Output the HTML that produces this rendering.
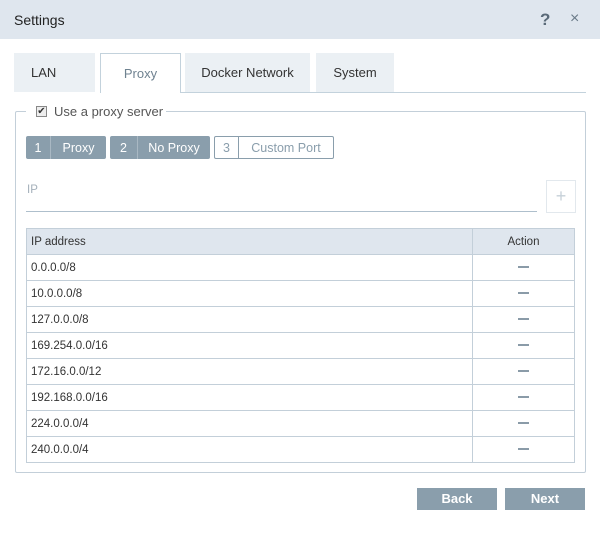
<!DOCTYPE html><html><head><style>
*{box-sizing:border-box;margin:0;padding:0}
body{width:600px;height:538px;background:#fff;font-family:"Liberation Sans",sans-serif;position:relative;overflow:hidden;color:#333}
.a{position:absolute}
.hdr{left:0;top:0;width:600px;height:39px;background:#dfe6ee}
.tab{top:53px;height:39px;background:#ebf0f4;font-size:13px;color:#333;line-height:39px;text-align:center}
.step{top:136px;height:23px;font-size:12.5px;line-height:24px;display:flex;border-radius:2px}
.step span{display:block;text-align:center}
td,th{border:1px solid #c3cfd9;font-size:11.5px;height:26px;padding:0 4px;font-weight:normal;text-align:left}
th{background:#dfe6ee}
.btn{top:488px;width:80px;height:22px;background:#8a9eac;color:#fff;font-weight:bold;font-size:13px;text-align:center;line-height:22px}
.dash{display:inline-block;width:11px;height:2px;background:#8a9ba8;vertical-align:middle}
</style></head><body>
<div class="a hdr"></div>
<div class="a" style="left:14px;top:12px;font-size:14px;color:#222">Settings</div>
<div class="a" style="left:540px;top:10px;font-size:17px;font-weight:bold;color:#5a6a78">?</div>
<div class="a" style="left:570px;top:10px;font-size:16px;color:#6a7a88">×</div>
<div class="a" style="left:180px;top:92px;width:406px;height:1px;background:#c3d2dc"></div>
<div class="a tab" style="left:14px;width:81px;text-align:left;padding-left:17px">LAN</div>
<div class="a tab" style="left:100px;width:81px;height:40px;background:#fff;border:1px solid #c3d2dc;border-bottom:none;color:#6f8290">Proxy</div>
<div class="a tab" style="left:185px;width:125px">Docker Network</div>
<div class="a tab" style="left:316px;width:78px">System</div>
<div class="a" style="left:15px;top:111px;width:571px;height:362px;border:1px solid #c3cfd9;border-radius:2px"></div>
<div class="a" style="left:26px;top:103px;width:140px;height:16px;background:#fff"></div>
<div class="a" style="left:36px;top:106px;width:11px;height:11px;border:1px solid #888;background:#eee;font-size:10px;line-height:9px;text-align:center;color:#333">✔</div>
<div class="a" style="left:54px;top:104px;font-size:13px;color:#555">Use a proxy server</div>
<div class="a step" style="left:26px;width:80px;background:#8a9eac;color:#fff"><span style="width:25px;border-right:1px solid #a9b8c3">1</span><span style="flex:1">Proxy</span></div>
<div class="a step" style="left:110px;width:100px;background:#8a9eac;color:#fff"><span style="width:28px;border-right:1px solid #a9b8c3">2</span><span style="flex:1">No Proxy</span></div>
<div class="a step" style="left:214px;width:120px;border:1px solid #8a9eac;color:#8a9eac;line-height:22px"><span style="width:24px;border-right:1px solid #8a9eac">3</span><span style="flex:1">Custom Port</span></div>
<div class="a" style="left:27px;top:184px;font-size:11.5px;color:#a4b0ba">IP</div>
<div class="a" style="left:26px;top:211px;width:511px;height:1px;background:#aebfcc"></div>
<div class="a" style="left:546px;top:180px;width:30px;height:33px;border:1px solid #e2e8ed;color:#c6d0d8;font-size:18px;text-align:center;line-height:31px">+</div>
<table class="a" style="left:26px;top:228px;width:549px;border-collapse:collapse">
<tr><th>IP address</th><th style="width:102px;text-align:center">Action</th></tr>
<tr><td>0.0.0.0/8</td><td style="text-align:center"><i class="dash"></i></td></tr>
<tr><td>10.0.0.0/8</td><td style="text-align:center"><i class="dash"></i></td></tr>
<tr><td>127.0.0.0/8</td><td style="text-align:center"><i class="dash"></i></td></tr>
<tr><td>169.254.0.0/16</td><td style="text-align:center"><i class="dash"></i></td></tr>
<tr><td>172.16.0.0/12</td><td style="text-align:center"><i class="dash"></i></td></tr>
<tr><td>192.168.0.0/16</td><td style="text-align:center"><i class="dash"></i></td></tr>
<tr><td>224.0.0.0/4</td><td style="text-align:center"><i class="dash"></i></td></tr>
<tr><td>240.0.0.0/4</td><td style="text-align:center"><i class="dash"></i></td></tr>
</table>
<div class="a btn" style="left:417px">Back</div>
<div class="a btn" style="left:505px">Next</div>
</body></html>
